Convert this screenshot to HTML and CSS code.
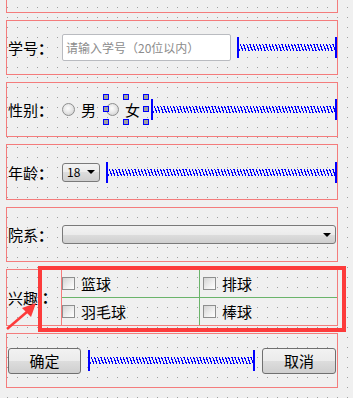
FILE: index.html
```html
<!DOCTYPE html>
<html lang="zh-CN">
<head>
    <meta charset="UTF-8">
    <title>学生信息</title>
    <link rel="stylesheet" href="styles.css">
</head>
<body>
<div class="form">
    <div class="row"></div>

    <div class="row">
        <span class="caption">学号<span class="colon">：</span></span>
        <input class="line-edit" type="text" placeholder="请输入学号（20位以内）">
        <div class="spacer"><span class="spring"></span></div>
    </div>

    <div class="row">
        <span class="caption">性别<span class="colon">：</span></span>
        <label class="radio-item"><span class="radio"></span>男</label>
        <label class="radio-item selected">
            <span class="radio"></span>女
            <i class="handle h-tl"></i><i class="handle h-tm"></i><i class="handle h-tr"></i>
            <i class="handle h-ml"></i><i class="handle h-mr"></i>
            <i class="handle h-bl"></i><i class="handle h-bm"></i><i class="handle h-br"></i>
        </label>
        <div class="spacer gap-5"><span class="spring"></span></div>
    </div>

    <div class="row">
        <span class="caption">年龄<span class="colon">：</span></span>
        <div class="combo combo-small"><span>18</span><span class="arrow"></span></div>
        <div class="spacer gap-6"><span class="spring"></span></div>
    </div>

    <div class="row">
        <span class="caption">院系<span class="colon">：</span></span>
        <div class="combo combo-wide"><span></span><span class="arrow"></span></div>
    </div>

    <div class="row row-hobby">
        <span class="caption caption-box">兴趣<span class="colon">：</span></span>
        <div class="hobby-grid">
            <label class="cell"><span class="check"></span>篮球</label>
            <label class="cell cell-right"><span class="check"></span>排球</label>
            <label class="cell"><span class="check"></span>羽毛球</label>
            <label class="cell cell-right"><span class="check"></span>棒球</label>
        </div>
    </div>

    <div class="row">
        <button class="btn btn-ok">确定</button>
        <div class="spacer gap-7"><span class="spring"></span></div>
        <button class="btn btn-cancel">取消</button>
    </div>
</div>

<!-- 标注 -->
<div class="mark-box"></div>
<svg class="mark-arrow" width="40" height="34" viewBox="0 0 40 34">
    <line x1="3" y1="31" x2="24" y2="13" stroke="#fd3b3b" stroke-width="2.5"/>
    <polygon points="32,5 18,10 27,19" fill="#fd3b3b"/>
</svg>
</body>
</html>
```

FILE: styles.css
```css
body {
    margin: 0;
    width: 353px;
    height: 398px;
    overflow: hidden;
    position: relative;
    font-family: "Noto Sans CJK SC", sans-serif;
    font-size: 15px;
    color: #000;
    background-color: #f0f0f0;
    background-image: conic-gradient(from 270deg at 1px 1px, #a0a0a0 90deg, transparent 0);
    background-size: 10px 10px;
    background-position: 7px 7px;
}

.form {
    display: flex;
    flex-direction: column;
    gap: 7px;
    width: 332px;
    margin-top: -42px;
    padding-left: 6px;
}

.row {
    box-sizing: border-box;
    height: 55px;
    border: 1px solid #f47c7c;
    display: flex;
    align-items: center;
}

.row:nth-child(4) {
    height: 56px;
}

.caption {
    box-sizing: border-box;
    width: 55px;
    padding-left: 1px;
    line-height: 1;
    flex-shrink: 0;
}

.colon {
    font-family: "Noto Sans CJK JP", sans-serif;
    font-weight: bold;
}

/* 输入框 */
.line-edit {
    box-sizing: border-box;
    width: 169px;
    height: 27px;
    margin: 0 6px 0 0;
    padding: 0 3px;
    border: 1px solid #b9bbc0;
    border-radius: 2px;
    background: #fff;
    font-family: inherit;
    font-size: 12px;
    outline: none;
}

.line-edit::placeholder {
    color: #8c8c8c;
}

/* 弹簧 */
.spacer {
    flex: 1;
    height: 21px;
    border-left: 2px solid #0000ff;
    border-right: 2px solid #0000ff;
    display: flex;
    align-items: center;
}

.spring {
    flex: 1;
    height: 7px;
    background: repeating-linear-gradient(70deg, #0000ff 0 1.2px, transparent 1.2px 3px);
}

.gap-5 { margin-left: 5px; }
.gap-6 { margin-left: 6px; }
.gap-7 { margin: 0 7px; }

/* 单选 */
.radio-item {
    display: flex;
    align-items: center;
    line-height: 1;
}

.radio-item + .radio-item {
    margin-left: 10px;
}

.radio {
    box-sizing: border-box;
    width: 13px;
    height: 13px;
    margin-right: 6px;
    border: 1px solid #8e8f8f;
    border-radius: 50%;
    background: radial-gradient(circle at 45% 40%, #fdfdfd 0, #e8e8e8 45%, #c8c8c8 100%);
}

.selected {
    position: relative;
    height: 25px;
    width: 40px;
}

.handle {
    position: absolute;
    box-sizing: border-box;
    width: 6px;
    height: 6px;
    border: 1px solid #0000ff;
    background: #a0a0a0;
}

.h-tl, .h-tm, .h-tr { top: -3px; }
.h-ml, .h-mr { top: 9px; }
.h-bl, .h-bm, .h-br { top: 22px; }
.h-tl, .h-ml, .h-bl { left: -3px; }
.h-tm, .h-bm { left: 17px; }
.h-tr, .h-mr, .h-br { left: 37px; }

/* 下拉框 */
.combo {
    box-sizing: border-box;
    height: 19px;
    display: flex;
    align-items: center;
    justify-content: space-between;
    padding: 0 4px 0 4px;
    border: 1px solid #7a7a7a;
    border-radius: 3px;
    background: linear-gradient(#f3f3f3 0, #ebebeb 50%, #dddddd 50%, #cfcfcf 100%);
    font-size: 12px;
    line-height: 1;
}

.combo-small {
    width: 38px;
}

.combo-wide {
    flex: 1;
    margin-right: 1px;
}

.arrow {
    width: 0;
    height: 0;
    border-left: 4px solid transparent;
    border-right: 4px solid transparent;
    border-top: 4px solid #000;
}

/* 兴趣 */
.row-hobby {
    height: 57px;
    align-items: stretch;
}

.caption-box {
    display: flex;
    align-items: center;
    border-right: 1px solid #f47c7c;
}

.hobby-grid {
    flex: 1;
    display: grid;
    grid-template-columns: 137px 1fr;
    grid-template-rows: 1fr 1fr;
}

.cell {
    display: flex;
    align-items: center;
    line-height: 1;
}

.cell:nth-child(-n+2) {
    border-bottom: 1px solid #6ab46a;
}

.cell-right {
    border-left: 1px solid #6ab46a;
    padding-left: 3px;
}

.check {
    box-sizing: border-box;
    width: 13px;
    height: 13px;
    margin-right: 6px;
    border: 1px solid #8e8f8f;
    background: linear-gradient(135deg, #d4d4d4 0, #f0f0f0 60%, #ffffff 100%);
}

/* 按钮 */
.btn {
    box-sizing: border-box;
    height: 26px;
    border: 1px solid #707070;
    border-radius: 3px;
    background: linear-gradient(#f2f2f2 0, #ebebeb 50%, #dddddd 50%, #cfcfcf 100%);
    font-family: inherit;
    font-size: 15px;
    line-height: 1;
    padding: 0;
}

.btn-ok {
    width: 73px;
    margin-left: 1px;
}

.btn-cancel {
    width: 74px;
    margin-right: 1px;
}

/* 红色标注 */
.mark-box {
    position: absolute;
    left: 38px;
    top: 266px;
    width: 308px;
    height: 66px;
    box-sizing: border-box;
    border: 4px solid #fd3b3b;
}

.mark-arrow {
    position: absolute;
    left: 4px;
    top: 298px;
}
```
